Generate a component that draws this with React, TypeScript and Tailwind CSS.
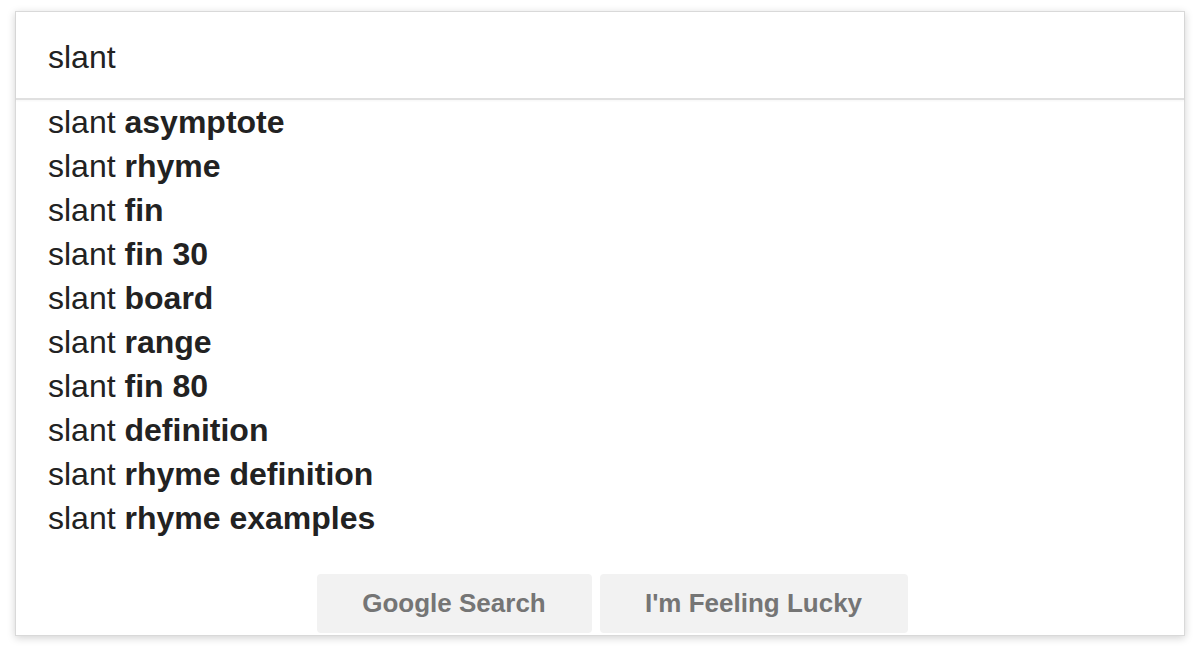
import React from 'react';

const suggestions: string[] = [
  'asymptote',
  'rhyme',
  'fin',
  'fin 30',
  'board',
  'range',
  'fin 80',
  'definition',
  'rhyme definition',
  'rhyme examples',
];

const App: React.FC = () => {
  return (
    <div className="w-[1200px] h-[660px] bg-white pt-[11px] pl-[15px] font-['Liberation_Sans']">
      <div className="box-border w-[1170px] h-[625px] bg-white border border-[#d9d9d9] shadow-[0_2px_8px_rgba(0,0,0,0.18)] flex flex-col">
        <div className="h-[88px] flex items-center pl-[32px] pt-[4px] text-[32px] text-[#222] border-b-2 border-[#e0e0e0] shadow-[0_1px_2px_rgba(0,0,0,0.04)]">
          slant
        </div>
        <ul className="flex flex-col">
          {suggestions.map((s) => (
            <li key={s} className="h-[44px] flex items-center pl-[32px] text-[32px] text-[#222] leading-none">
              <span>slant&nbsp;</span>
              <b className="font-bold">{s}</b>
            </li>
          ))}
        </ul>
        <div className="flex justify-center gap-[8px] pl-[24px] mt-[34px]">
          <button className="w-[275px] h-[59px] rounded-[4px] bg-[#f2f2f2] text-[#757575] text-[26px] font-bold">
            Google Search
          </button>
          <button className="w-[308px] h-[59px] rounded-[4px] bg-[#f2f2f2] text-[#757575] text-[26px] font-bold">
            I'm Feeling Lucky
          </button>
        </div>
      </div>
    </div>
  );
};

export default App;
